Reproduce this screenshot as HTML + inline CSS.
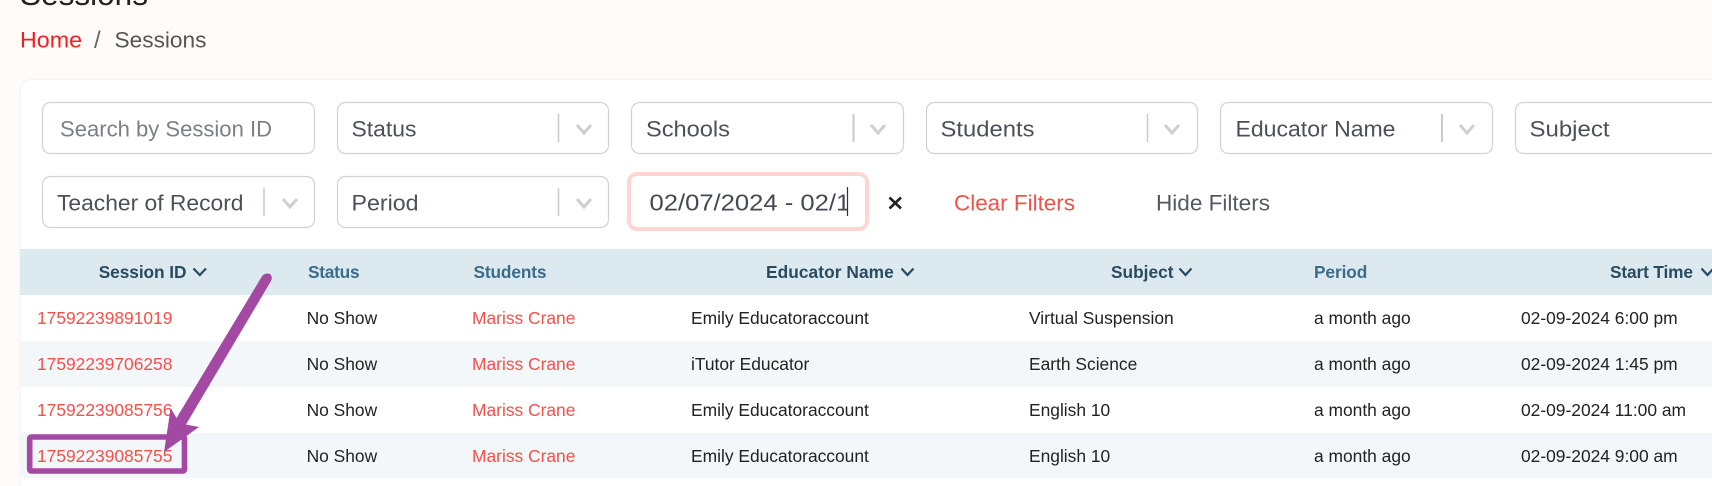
<!DOCTYPE html>
<html><head><meta charset="utf-8"><style>
html,body{margin:0;padding:0;background:#fffbf8;width:1712px;height:486px;overflow:hidden}
svg{display:block;font-family:"Liberation Sans",sans-serif}
.f{font-size:22px;fill:#4c5058}
.t{font-size:17.4px;fill:#222}
.r{font-size:17.4px;fill:#f4504a}
.h{font-size:17.3px;font-weight:700;fill:#2a4a60}
.l{font-size:17.3px;font-weight:700;fill:#3b6c8a}
.b{fill:#fff;stroke:#d0d2d4;stroke-width:1.2}
.s{stroke:#c9cacb;stroke-width:1.5}
.c{fill:none;stroke:#cfcfcf;stroke-width:3}
.hc{fill:none;stroke:#2a4a60;stroke-width:2.2}
</style></head><body>
<svg width="1712" height="486" viewBox="0 0 1712 486" xmlns="http://www.w3.org/2000/svg">
<defs><clipPath id="dc"><rect x="640" y="180" width="207" height="40"/></clipPath></defs>
<rect width="1712" height="486" fill="#fffbf8"/>
<text x="20" y="5" font-size="31.5" fill="#222" textLength="128" lengthAdjust="spacingAndGlyphs">Sessions</text>
<text x="20" y="47.5" font-size="22" fill="#ef2020" textLength="62" lengthAdjust="spacingAndGlyphs">Home</text>
<text x="94" y="48" font-size="24" fill="#666">/</text>
<text x="114.5" y="47.5" font-size="22" fill="#555" textLength="92" lengthAdjust="spacingAndGlyphs">Sessions</text>

<rect x="20" y="79.5" width="1720" height="420" rx="12" fill="#fff" stroke="#f3f0ee" stroke-width="1"/>

<rect class="b" x="42.5" y="102.5" width="272" height="51" rx="8"/>
<text class="f" x="60" y="136.5" style="fill:#7b8087" textLength="212" lengthAdjust="spacingAndGlyphs">Search by Session ID</text>

<rect class="b" x="337.5" y="102.5" width="271" height="51" rx="8"/>
<text class="f" x="351.5" y="136.5" textLength="65" lengthAdjust="spacingAndGlyphs">Status</text>
<line class="s" x1="558.5" y1="114" x2="558.5" y2="142"/><polyline class="c" points="577,125 584,133 591,125"/>

<rect class="b" x="631.5" y="102.5" width="272" height="51" rx="8"/>
<text class="f" x="646" y="136.5" textLength="84" lengthAdjust="spacingAndGlyphs">Schools</text>
<line class="s" x1="853.5" y1="114" x2="853.5" y2="142" style="stroke-width:2"/><polyline class="c" points="871,125 878,133 885,125"/>

<rect class="b" x="926.5" y="102.5" width="271" height="51" rx="8"/>
<text class="f" x="940.5" y="136.5" textLength="94" lengthAdjust="spacingAndGlyphs">Students</text>
<line class="s" x1="1147.5" y1="114" x2="1147.5" y2="142"/><polyline class="c" points="1165,125 1172,133 1179,125"/>

<rect class="b" x="1220.5" y="102.5" width="272" height="51" rx="8"/>
<text class="f" x="1235.5" y="136.5" textLength="160" lengthAdjust="spacingAndGlyphs">Educator Name</text>
<line class="s" x1="1442" y1="114" x2="1442" y2="142" style="stroke-width:2"/><polyline class="c" points="1460,125 1467,133 1474,125"/>

<rect class="b" x="1515.5" y="102.5" width="271" height="51" rx="8"/>
<text class="f" x="1529.5" y="136.5" textLength="80" lengthAdjust="spacingAndGlyphs">Subject</text>

<rect class="b" x="42.5" y="176.5" width="272" height="51" rx="8"/>
<text class="f" x="57" y="210.5" textLength="186.5" lengthAdjust="spacingAndGlyphs">Teacher of Record</text>
<line class="s" x1="264" y1="188" x2="264" y2="216"/><polyline class="c" points="283,199 290,207 297,199"/>

<rect class="b" x="337.5" y="176.5" width="271" height="51" rx="8"/>
<text class="f" x="351.5" y="210.5" textLength="67" lengthAdjust="spacingAndGlyphs">Period</text>
<line class="s" x1="558.5" y1="188" x2="558.5" y2="216"/><polyline class="c" points="577,199 584,207 591,199"/>

<rect x="629" y="174" width="238" height="55" rx="8" fill="#fff" stroke="#fdd6d4" stroke-width="4"/>
<g clip-path="url(#dc)"><text x="649.5" y="210.5" font-size="23" fill="#454a52" textLength="279" lengthAdjust="spacingAndGlyphs">02/07/2024 - 02/10/2024</text></g>
<line x1="847.5" y1="187" x2="847.5" y2="216" stroke="#333" stroke-width="1.2"/>

<path d="M889.5 197.5L901 208.5M901 197.5L889.5 208.5" stroke="#222" stroke-width="2.6" fill="none"/>
<text x="954" y="210.5" font-size="22" fill="#f4504a" textLength="121" lengthAdjust="spacingAndGlyphs">Clear Filters</text>
<text x="1156" y="210.5" font-size="22" fill="#555a62" textLength="114" lengthAdjust="spacingAndGlyphs">Hide Filters</text>

<rect x="20" y="249" width="1692" height="46" fill="#dce9ef"/>
<rect x="20" y="341" width="1692" height="46" fill="#f4f7fa"/>
<rect x="20" y="433" width="1692" height="45" fill="#f4f7fa"/>

<text class="h" x="98.7" y="278" textLength="87.8">Session ID</text>
<polyline class="hc" points="193.5,268.5 199.8,275 206,268.5"/>
<text class="l" x="308" y="278" textLength="51.6">Status</text>
<text class="l" x="473.5" y="278" textLength="73">Students</text>
<text class="h" x="766" y="278" textLength="127.7">Educator Name</text>
<polyline class="hc" points="901.5,268.5 907.5,275 913.5,268.5"/>
<text class="h" x="1111" y="278" textLength="62.5">Subject</text>
<polyline class="hc" points="1179.5,268.5 1185.5,275 1191.5,268.5"/>
<text class="l" x="1314" y="278" textLength="53.3">Period</text>
<text class="h" x="1610" y="278" textLength="83">Start Time</text>
<polyline class="hc" points="1701.5,268.5 1707.5,275 1713.5,268.5"/>

<text class="r" x="37" y="324">17592239891019</text>
<text class="t" x="306.6" y="324">No Show</text>
<text class="r" x="472" y="324">Mariss Crane</text>
<text class="t" x="691" y="324">Emily Educatoraccount</text>
<text class="t" x="1029" y="324">Virtual Suspension</text>
<text class="t" x="1314" y="324">a month ago</text>
<text class="t" x="1521" y="324">02-09-2024 6:00 pm</text>

<text class="r" x="37" y="370">17592239706258</text>
<text class="t" x="306.6" y="370">No Show</text>
<text class="r" x="472" y="370">Mariss Crane</text>
<text class="t" x="691" y="370">iTutor Educator</text>
<text class="t" x="1029" y="370">Earth Science</text>
<text class="t" x="1314" y="370">a month ago</text>
<text class="t" x="1521" y="370">02-09-2024 1:45 pm</text>

<text class="r" x="37" y="416">17592239085756</text>
<text class="t" x="306.6" y="416">No Show</text>
<text class="r" x="472" y="416">Mariss Crane</text>
<text class="t" x="691" y="416">Emily Educatoraccount</text>
<text class="t" x="1029" y="416">English 10</text>
<text class="t" x="1314" y="416">a month ago</text>
<text class="t" x="1521" y="416">02-09-2024 11:00 am</text>

<text class="r" x="37" y="462">17592239085755</text>
<text class="t" x="306.6" y="462">No Show</text>
<text class="r" x="472" y="462">Mariss Crane</text>
<text class="t" x="691" y="462">Emily Educatoraccount</text>
<text class="t" x="1029" y="462">English 10</text>
<text class="t" x="1314" y="462">a month ago</text>
<text class="t" x="1521" y="462">02-09-2024 9:00 am</text>

<rect x="29.7" y="437" width="154.8" height="34" rx="1.5" fill="none" stroke="#a349a4" stroke-width="5.6"/>
<path d="M262.5 275.5Q266 272.5 270 274Q273 277 271 281L186 424.5L199 427L164 452L170.7 408L176.5 418Z" fill="#a349a4"/>
</svg>
</body></html>
